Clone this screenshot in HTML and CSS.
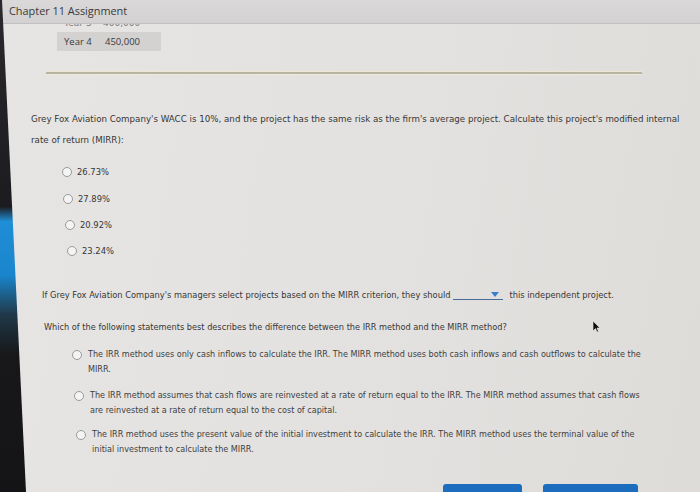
FILE: index.html
```html
<!DOCTYPE html>
<html>
<head>
<meta charset="utf-8">
<link rel="stylesheet" href="styles.css">
</head>
<body>
<div class="page">
  <header class="topbar">Chapter 11 Assignment</header>
  <div class="cutrow"><span class="cut-inner">Year 3 &nbsp;&nbsp; 400,000</span></div>
  <div class="yearbox"><span class="yr">Year 4</span><span class="amt">450,000</span></div>
  <div class="rule"></div>

  <p class="q1">Grey Fox Aviation Company's WACC is 10%, and the project has the same risk as the firm's average project. Calculate this project's modified internal rate of return (MIRR):</p>

  <ul class="opts1">
    <li class="o o1"><span class="radio"></span>26.73%</li>
    <li class="o o2"><span class="radio"></span>27.89%</li>
    <li class="o o3"><span class="radio"></span>20.92%</li>
    <li class="o o4"><span class="radio"></span>23.24%</li>
  </ul>

  <p class="q2">If Grey Fox Aviation Company's managers select projects based on the MIRR criterion, they should <span class="select"><span class="caret"></span></span> this independent project.</p>

  <p class="q3">Which of the following statements best describes the difference between the IRR method and the MIRR method?</p>

  <ul class="opts2">
    <li class="o2row r1"><span class="radio"></span><span class="otext">The IRR method uses only cash inflows to calculate the IRR. The MIRR method uses both cash inflows and cash outflows to calculate the MIRR.</span></li>
    <li class="o2row r2"><span class="radio"></span><span class="otext">The IRR method assumes that cash flows are reinvested at a rate of return equal to the IRR. The MIRR method assumes that cash flows are reinvested at a rate of return equal to the cost of capital.</span></li>
    <li class="o2row r3"><span class="radio"></span><span class="otext">The IRR method uses the present value of the initial investment to calculate the IRR. The MIRR method uses the terminal value of the initial investment to calculate the MIRR.</span></li>
  </ul>

  <div class="buttons"><span class="btn b1"></span><span class="btn b2"></span></div>

  <div class="bezel"></div>
  <svg class="cursor" width="8" height="12" viewBox="0 0 8 12"><path d="M1 0 L1 10 L3.5 7.5 L5 11 L6.5 10.4 L5 7 L8 7 Z" fill="#111" stroke="#eee" stroke-width="0.6"/></svg>
</div>
</body>
</html>
```

FILE: styles.css
```css
html, body {
  margin: 0;
  padding: 0;
}
body {
  width: 700px;
  height: 492px;
  overflow: hidden;
  background: #e4e2e0;
  font-family: "DejaVu Sans", Verdana, sans-serif;
  color: #3c3c3c;
}
.page {
  position: relative;
  width: 700px;
  height: 492px;
  overflow: hidden;
  background: linear-gradient(100deg, #e6e5e3 0%, #e3e1df 60%, #dedcd9 100%);
}
.topbar {
  height: 23px;
  line-height: 21px;
  padding-left: 9px;
  background: linear-gradient(180deg, #dad8d8, #d3d1d1);
  border-bottom: 1px solid #c2c0c0;
  font-family: "Open Sans", sans-serif;
  font-size: 10.9px;
  color: #3a3a3a;
}
.cutrow {
  height: 4px;
  overflow: hidden;
  margin-left: 64px;
  font-size: 9px;
  color: #7a7a7a;
}
.cut-inner {
  display: block;
  margin-top: -6px;
}
.yearbox {
  margin: 4px 0 0 57px;
  width: 104px;
  height: 19px;
  background: #d3d2d1;
  display: flex;
  align-items: center;
  font-family: "Open Sans", sans-serif;
  font-size: 9.5px;
  color: #3a3a3a;
}
.yr { margin-left: 7px; width: 41px; }
.rule {
  margin: 20px 0 0 46px;
  width: 596px;
  height: 2px;
  background: #b9b3a3;
  border-top: 1px solid #eee6d2;
  border-bottom: 1px solid #efe9da;
}
.q1 {
  margin: 34px 18px 0 31px;
  font-size: 8.7px;
  line-height: 21px;
  color: #363636;
}
ul {
  list-style: none;
  margin: 0;
  padding: 0;
}
.opts1 { margin-top: 8px; }
.o {
  display: flex;
  align-items: center;
  height: 26px;
  font-size: 8.4px;
  color: #363636;
}
.o1 { margin-left: 62px; }
.o2 { margin-left: 63px; height: 27px; }
.o3 { margin-left: 65px; height: 26px; }
.o4 { margin-left: 67px; }
.radio {
  display: inline-block;
  flex: none;
  width: 8px;
  height: 8px;
  border: 1px solid #9a9a9a;
  border-radius: 50%;
  background: #f4f4f4;
  margin-right: 5px;
}
.q2 {
  margin: 26px 0 0 42px;
  font-size: 8.3px;
  color: #363636;
  display: flex;
  align-items: center;
  white-space: nowrap;
}
.select {
  display: inline-block;
  position: relative;
  width: 50px;
  height: 9px;
  border-bottom: 1px solid #4a6a9a;
  margin: 0 6px 0 3px;
}
.caret {
  position: absolute;
  right: 4px;
  top: 2px;
  width: 0;
  height: 0;
  border-left: 4px solid transparent;
  border-right: 4px solid transparent;
  border-top: 5px solid #3b7bd0;
}
.q3 {
  margin: 22px 0 0 44px;
  font-size: 8.2px;
  color: #363636;
}
.opts2 { margin-top: 15px; margin-right: 52px; }
.o2row {
  display: flex;
  align-items: flex-start;
  font-size: 8.1px;
  line-height: 15px;
  color: #3e3e3e;
}
.o2row .radio { margin-top: 3px; margin-right: 6px; }
.r1 { margin-left: 72px; }
.r2 { margin-left: 74px; margin-top: 11px; }
.r3 { margin-left: 76px; margin-top: 9px; }
.buttons {
  position: absolute;
  left: 443px;
  top: 484px;
  display: flex;
  gap: 21px;
}
.btn {
  display: block;
  height: 10px;
  background: #1c6dbd;
  border-radius: 3px 3px 0 0;
}
.b1 { width: 79px; }
.b2 { width: 95px; }
.bezel {
  position: absolute;
  left: 0;
  top: 0;
  width: 28px;
  height: 492px;
  clip-path: polygon(0 0, 2px 0, 26px 492px, 0 492px);
  background: linear-gradient(180deg, #2a2a2e 0%, #1c1c20 42%, #1f8ed6 45%, #1a85cc 56%, #203848 64%, #18181a 72%, #141416 100%);
}
.cursor {
  position: absolute;
  left: 592px;
  top: 321px;
}
```
